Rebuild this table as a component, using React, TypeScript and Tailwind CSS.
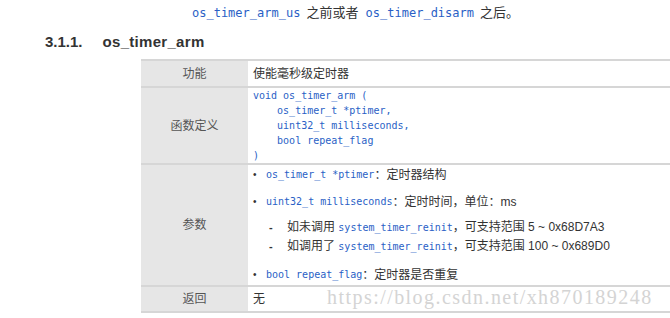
const sans = 'font-["Liberation_Sans","Noto_Sans_CJK_SC",sans-serif]';
const mono = 'font-["DejaVu_Sans_Mono","Liberation_Mono",monospace] text-[#2a5fc6]';

function Code({ children, size = 'text-[10px]' }: { children: React.ReactNode; size?: string }) {
  return <span className={`${mono} ${size}`}>{children}</span>;
}

function Row({ label, height, children }: { label: string; height: string; children: React.ReactNode }) {
  return (
    <div className={`flex border-t-2 border-[#d6d6d6] ${height}`}>
      <div className="w-[107px] shrink-0 bg-[#e6e6e6] flex items-center justify-center text-[12px] text-[#555]">
        {label}
      </div>
      <div className="flex-1 pl-[5px] text-[12px] text-[#333]">{children}</div>
    </div>
  );
}

export default function App() {
  return (
    <div className={`relative w-[670px] h-[318px] bg-white overflow-hidden ${sans}`}>
      <div className="pl-[192px] pt-[3px] h-[22px] flex items-center text-[13px] text-[#333]">
        <Code size="text-[12px]">os_timer_arm_us</Code>
        <span className="ml-[6px]">之前或者</span>
        <Code size="text-[12px]">&nbsp;os_timer_disarm</Code>
        <span className="ml-[6px]">之后。</span>
      </div>

      <div className="mt-[10px] pl-[45px] h-[20px] flex items-center text-[15px] font-semibold text-[#333]">
        <span>3.1.1.</span>
        <span className="ml-[20px] tracking-[0.3px]">os_timer_arm</span>
      </div>

      <div className="ml-[141px] mt-[7px] w-[540px] border-b-2 border-[#d6d6d6]">
        <Row label="功能" height="h-[27px]">
          <div className="h-full flex items-center">使能毫秒级定时器</div>
        </Row>
        <Row label="函数定义" height="h-[77px]">
          <div className={`${mono} text-[10px] leading-[15px] whitespace-pre`}>
            {'void os_timer_arm (\n    os_timer_t *ptimer,\n    uint32_t milliseconds,\n    bool repeat_flag\n)'}
          </div>
        </Row>
        <Row label="参数" height="h-[122px]">
          <div className="leading-[20px]">
            <div className="flex items-center">
              <span className="w-[13px] text-[10px] text-[#333]">•</span>
              <Code>os_timer_t *ptimer</Code>
              <span>：定时器结构</span>
            </div>
            <div className="flex items-center mt-[7px]">
              <span className="w-[13px] text-[10px] text-[#333]">•</span>
              <Code>uint32_t milliseconds</Code>
              <span>：定时时间，单位：ms</span>
            </div>
            <div className="mt-[6px] pl-[16px] leading-[19px]">
              <div className="flex items-center">
                <span className="w-[18px] text-[11px] font-bold text-[#333]">-</span>
                <span>如未调用&nbsp;</span>
                <Code>system_timer_reinit</Code>
                <span>，可支持范围 5 ~ 0x68D7A3</span>
              </div>
              <div className="flex items-center">
                <span className="w-[18px] text-[11px] font-bold text-[#333]">-</span>
                <span>如调用了&nbsp;</span>
                <Code>system_timer_reinit</Code>
                <span>，可支持范围 100 ~ 0x689D0</span>
              </div>
            </div>
            <div className="flex items-center mt-[9px]">
              <span className="w-[13px] text-[10px] text-[#333]">•</span>
              <Code>bool repeat_flag</Code>
              <span>：定时器是否重复</span>
            </div>
          </div>
        </Row>
        <Row label="返回" height="h-[26px]">
          <div className="h-full flex items-center">无</div>
        </Row>
      </div>

      <div className='absolute left-[327px] top-[284px] text-[20px] leading-[26px] tracking-[1.45px] text-[#d4d4d4] font-["Liberation_Serif",serif]'>
        https://blog.csdn.net/xh870189248
      </div>
    </div>
  );
}
